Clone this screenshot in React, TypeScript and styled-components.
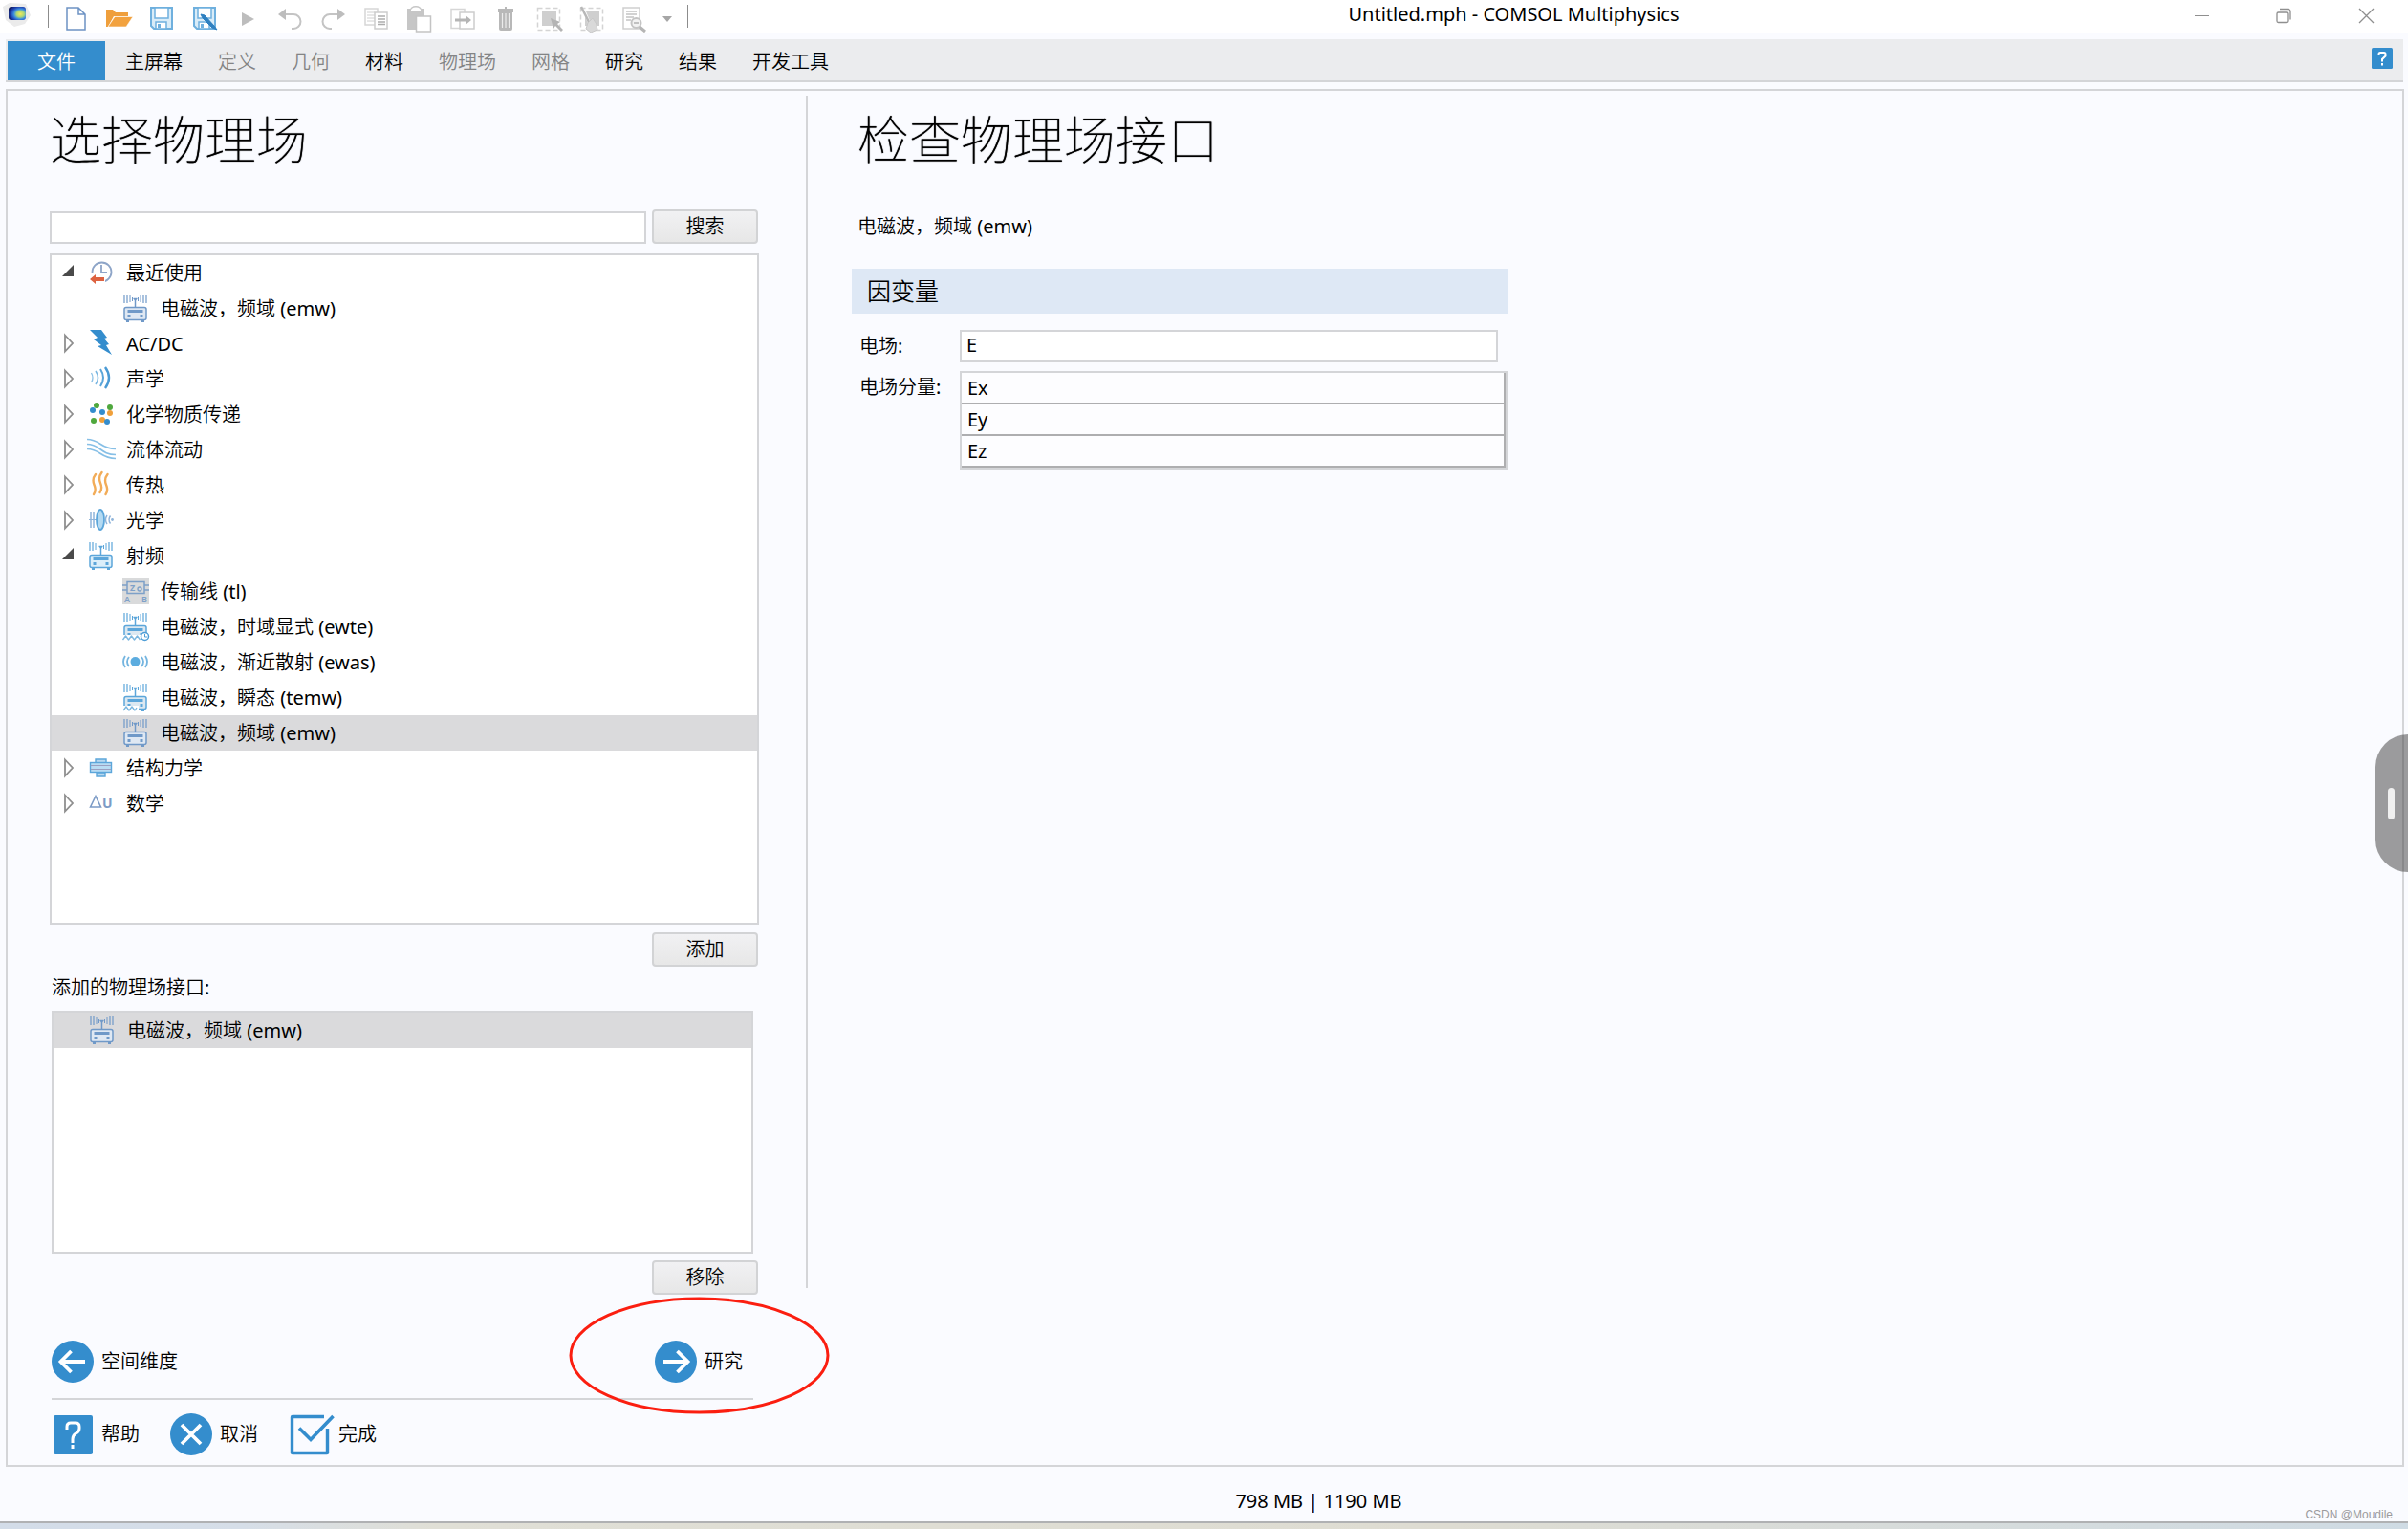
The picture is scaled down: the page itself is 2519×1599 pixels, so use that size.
import React from "react";
import styled, { createGlobalStyle, css } from "styled-components";

const FONT = `"Noto Sans", "Noto Sans CJK SC DemiLight", "Noto Sans CJK SC", sans-serif`;
const BLUE = "#348dcd";
const LINE = "#d4d5d8";
const BG = "#fafbff";

const GlobalStyle = createGlobalStyle`
  *, *::before, *::after { box-sizing: border-box; }
  body { margin: 0; background: ${BG}; }
  body, button, input, table { font-family: ${FONT}; font-size: 20px; line-height: 24px; color: #000; }
  button { margin: 0; padding: 0; border: 0; background: none; text-align: left; }
  svg { display: block; flex: none; }
`;

const Page = styled.div`
  position: relative;
  display: flex;
  flex-direction: column;
  min-height: 100vh;
  overflow: hidden;
`;

/* ---------- title bar ---------- */
const TitleBar = styled.header`
  display: flex;
  align-items: stretch;
  height: 35px;
  background: #fff;
`;
const Logo = styled.div`
  width: 50px;
`;
const Separator = styled.div`
  width: 1px;
  height: 24px;
  margin: 5px 6px 0 0;
  background: #8c8c8c;
`;
const QuickAccess = styled.div`
  display: flex;
`;
const WindowTitle = styled.h1`
  flex: 1;
  margin: 0;
  padding: 3px 0 0 180px;
  font-size: 20px;
  font-weight: 400;
  line-height: 24px;
  text-align: center;
`;
const WindowButtons = styled.div`
  display: flex;
`;

/* ---------- ribbon ---------- */
const Ribbon = styled.nav`
  display: flex;
  align-items: stretch;
  height: 45px;
  margin: 6px 5px 7px 6px;
  padding: 2px 11px 0 2px;
  background: #ebecee;
  border-bottom: 2px solid ${LINE};
`;
const FileTab = styled.button`
  width: 102px;
  margin-right: 3px;
  padding-top: 2px;
  text-align: center;
  color: #fff;
  background: ${BLUE};
`;
const Tab = styled.button`
  margin-right: 1px;
  padding: 2px 18px 0;
  color: ${(p) => (p.disabled ? "#838485" : "#000")};
`;
const RibbonHelp = styled.button`
  align-self: flex-start;
  margin: 7px 0 0 auto;
`;

/* ---------- wizard ---------- */
const Wizard = styled.main`
  flex: 1;
  display: grid;
  grid-template-columns: minmax(0, 1fr) minmax(0, 2fr);
  margin: 0 4px 0 6px;
  border: 2px solid ${LINE};
`;
const SelectPane = styled.section`
  display: flex;
  flex-direction: column;
  padding: 22px 49px 10px 44px;
`;
const ReviewPane = styled.section`
  margin: 5px 0 185px;
  padding: 17px 46px 0;
  border-left: 2px solid ${LINE};
`;
const Heading = styled.h2`
  margin: 0;
  font-family: "Noto Sans CJK SC", sans-serif;
  font-size: 54px;
  font-weight: 100;
  line-height: 54px;
  text-shadow: 0 0 1px #000;
`;
const SearchRow = styled.form`
  display: flex;
  align-items: flex-end;
  gap: 6px;
  margin: 48px 1px 10px 0;
`;
const TextField = styled.input`
  min-width: 0;
  height: 34px;
  padding: 0 5px 3px;
  background: #fff;
  border: 2px solid ${LINE};
  outline: 0;
`;
const SearchField = styled(TextField)`
  flex: 1;
`;
const PushButton = styled.button`
  flex: none;
  width: 111px;
  height: 36px;
  text-align: center;
  border: 2px solid #d2d3d5;
  border-radius: 4px;
  background: linear-gradient(#f1f1f3, #e7e7e7);
`;
const AddButton = styled(PushButton)`
  align-self: flex-end;
  margin: 8px 1px 10px 0;
`;
const RemoveButton = styled(PushButton)`
  align-self: flex-end;
  margin: 7px 1px 48px 0;
`;
const listBox = css`
  margin: 0;
  padding: 0;
  list-style: none;
  background: #fff;
  border: 2px solid ${LINE};
`;
const Tree = styled.ul`
  ${listBox}
  flex: 1;
`;
const AddedList = styled.ul`
  ${listBox}
  height: 254px;
  margin: 12px 6px 0 2px;
`;
const Row = styled.button<{ $indent: number; $selected?: boolean }>`
  display: flex;
  align-items: center;
  width: 100%;
  height: 37px;
  padding-left: ${(p) => p.$indent}px;
  background: ${(p) => (p.$selected ? "#dadadc" : "transparent")};
`;
const RowText = styled.span`
  padding-left: 11px;
  white-space: nowrap;
`;
const Twist = styled.span`
  width: 26px;
`;
const Caption = styled.div`
  padding-left: 2px;
`;
const StepRow = styled.div`
  display: flex;
  justify-content: space-between;
  margin: 0 6px 0 2px;
  padding-bottom: 16px;
  border-bottom: 2px solid ${LINE};
`;
const IconButton = styled.button`
  display: flex;
  align-items: center;
  gap: 8px;
  height: 44px;
`;
const NextHolder = styled.div`
  position: relative;
  width: 103px;
`;
const Highlight = styled.svg`
  position: absolute;
  left: -90px;
  top: -46px;
  pointer-events: none;
`;
const ActionRow = styled.div`
  display: flex;
  gap: 32px;
  margin: 14px 0 0 2px;
`;

/* ---------- review ---------- */
const Review = styled.div`
  max-width: 686px;
`;
const ReviewHeading = styled(Heading)`
  padding-left: 6px;
`;
const InterfaceName = styled.p`
  margin: 54px 0 32px;
  padding-left: 6px;
`;
const SectionTitle = styled.h3`
  margin: 0 0 17px;
  padding: 0 16px;
  font-size: 25px;
  font-weight: 400;
  line-height: 47px;
  background: #dee8f5;
`;
const Field = styled.div<{ $end: number }>`
  display: grid;
  grid-template-columns: 105px minmax(0, 1fr);
  align-items: start;
  margin-bottom: 9px;
  padding: 0 ${(p) => p.$end}px 0 8px;
`;
const FieldLabel = styled.label`
  line-height: 33px;
`;
const Components = styled.table`
  width: 100%;
  border-collapse: separate;
  border-spacing: 0;
  border: 2px solid ${LINE};
  background: #fdfdff;
`;
const Cell = styled.td`
  height: 33px;
  padding: 0 6px;
  border-bottom: 2px solid #aeaeb0;
  border-right: 2px solid #aeaeb0;
`;

/* ---------- footer and overlays ---------- */
const StatusBar = styled.footer`
  padding: 24px 0 9px 240px;
  text-align: center;
  border-bottom: 2px solid #b0b1b3;
`;
const Desktop = styled.div`
  height: 6px;
  background: linear-gradient(90deg, #d3dce8 0, #d6dee8 10%, #e0dfd6 18%, #dedcd2 60%, #cfdbe4 100%);
`;
const SideHandle = styled.button`
  position: absolute;
  right: 0;
  top: 768px;
  width: 34px;
  height: 144px;
  border-radius: 34px 0 0 34px;
  background: rgba(60, 60, 60, 0.5);
  &::before {
    content: "";
    display: block;
    width: 7px;
    height: 33px;
    margin-left: 13px;
    border-radius: 4px;
    background: #f0f0f0;
  }
`;
const Watermark = styled.div`
  position: absolute;
  right: 16px;
  bottom: 7px;
  font-family: "Liberation Sans", sans-serif;
  font-size: 12px;
  line-height: 16px;
  color: #9a9a9c;
`;

/* ---------- toolbar glyphs ---------- */
const G = "#c4c4c4";
const Glyph = ({ children, w = 45 }: { children: React.ReactNode; w?: number }) => (
  <svg width={w} height="35" viewBox={`0 0 ${w} 35`} fill="none" aria-hidden="true">
    {children}
  </svg>
);
const floppy = (
  <>
    <path d="M11 8h22v22H14l-3-3z" fill="#d9ecf8" stroke="#6fb0de" strokeWidth="2" />
    <path d="M15 8v11h14V8z" fill="#fff" stroke="#6fb0de" strokeWidth="1.5" />
    <path d="M16 30v-7h11v7z" fill="#fff" stroke="#6fb0de" strokeWidth="1.5" />
    <path d="M18 25h3v4h-3z" fill="#6fb0de" />
  </>
);
const dashedSelection = (
  <>
    <rect x="10.500" y="8.500" width="23" height="23" stroke="#d4d4d4" strokeWidth="1.5" strokeDasharray="5 3" />
    <path d="M15 12h15v15H15z" fill="#cfcfcf" />
  </>
);
const tools: [string, React.ReactNode][] = [
  ["新建", <path d="M13 8h12l7 7v16H13zM25 8v7h7" fill="#fff" stroke="#6d93c4" strokeWidth="1.5" />],
  [
    "打开",
    <>
      <path d="M9 28V10h7l3 3h13v4H17l-6 11z" fill="#ef9f3c" />
      <path d="M18 17.500h19L30 28H11z" fill="#f2a23f" stroke="#fff" strokeWidth="0.6" />
    </>,
  ],
  ["保存", floppy],
  [
    "另存为",
    <>
      {floppy}
      <path d="M18 15l4 1 10 11 3 4-5-2-10-10z" fill="#2f80c0" stroke="#2f80c0" />
    </>,
  ],
  ["运行", <path d="M16 13l13 7-13 7z" fill="#bdbdbd" />],
  [
    "撤消",
    <>
      <path d="M15 15h10a7.500 7.500 0 0 1 0 15h-2" stroke={G} strokeWidth="2" />
      <path d="M9 15l8-6v12z" fill="#bdbdbd" />
    </>,
  ],
  [
    "重做",
    <>
      <path d="M28 15H18a7.500 7.500 0 0 0 0 15h2" stroke={G} strokeWidth="2" />
      <path d="M34 15l-8-6v12z" fill="#bdbdbd" />
    </>,
  ],
  [
    "复制",
    <>
      <path d="M10 9h13v17H10z" fill="#fff" stroke="#d6d6d6" strokeWidth="1.5" />
      <path d="M12 13h8M12 16h8M12 19h8M12 22h8" stroke="#d0d0d0" />
      <path d="M20 13h13v17H20z" fill="#fff" stroke="#cdcdcd" strokeWidth="1.5" />
      <path d="M23 17h8M23 20h8M23 23h8M23 25.500h8" stroke="#adadad" strokeWidth="1.5" />
    </>,
  ],
  [
    "粘贴",
    <>
      <path d="M9 9h18v22H9z" fill="#c6c6c6" />
      <path d="M12 12c0-7 12-7 12 0z" fill="#fff" stroke="#c6c6c6" strokeWidth="1.5" />
      <path d="M18.500 17h15v16h-15z" fill="#fff" stroke={G} strokeWidth="1.5" />
    </>,
  ],
  [
    "重复",
    <>
      <path d="M10 9.500h14v20H10z" fill="#fff" stroke="#d6d6d6" strokeWidth="1.500" />
      <path d="M19 13h15v17H19z" fill="#fff" stroke="#cdcdcd" strokeWidth="1.5" />
      <path d="M14 21h12" stroke="#b5b5b5" strokeWidth="3" />
      <path d="M25 16l6 5-6 5z" fill="#b5b5b5" />
    </>,
  ],
  [
    "删除",
    <>
      <path d="M14 9h16v4H14zM21 7h2v3h-2z" fill="#b8b8b8" />
      <path d="M15 13h14v17q0 2-2 2H17q-2 0-2-2z" fill="#b8b8b8" />
      <path d="M18.500 14v15M22 14v15M25.500 14v15" stroke="#ececec" strokeWidth="1.200" />
    </>,
  ],
  [
    "选择",
    <>
      {dashedSelection}
      <path d="M24 19l10 4-3 2 6 6-2 2-6-6-2 3z" fill="#b4b4b4" />
    </>,
  ],
  [
    "清除选择",
    <>
      {dashedSelection}
      <path d="M14 11l5 12" stroke="#fff" strokeWidth="3" />
      <path d="M11 7l8 16" stroke="#b8b8b8" strokeWidth="2.5" />
      <path d="M18 24l5-5q5 6 5 12l-7 3-5-4z" fill="#d9d9d9" stroke="#c8c8c8" />
    </>,
  ],
  [
    "查找",
    <>
      <path d="M10 8h17v22H10z" fill="#fff" stroke="#cfcfcf" strokeWidth="1.5" />
      <path d="M13 12h11M13 15h11M13 18h8M13 21h5" stroke={G} strokeWidth="1.5" />
      <circle cx="23.500" cy="24" r="5" fill="#f2f2f2" stroke={G} strokeWidth="2" />
      <path d="M21 24h5" stroke="#b0b0b0" strokeWidth="1.5" />
      <path d="M27 28l6 5" stroke="#b5b5b5" strokeWidth="3" />
    </>,
  ],
];

const ComsolLogo = () => (
  <svg width="36" height="35" viewBox="0 0 36 35" aria-hidden="true">
    <defs>
      <radialGradient id="jet" cx="0.68" cy="0.55" r="0.75">
        <stop offset="0" stopColor="#f4ea5a" />
        <stop offset="0.3" stopColor="#a9d678" />
        <stop offset="0.5" stopColor="#3e8fe0" />
        <stop offset="0.75" stopColor="#1d3fae" />
        <stop offset="1" stopColor="#101a5c" />
      </radialGradient>
    </defs>
    <path d="M3 7l7-4 17 1 5 12-6 9-11 3-9-7z" fill="#ebebeb" />
    <rect x="9" y="7" width="18" height="14" rx="3" fill="url(#jet)" />
  </svg>
);

/* ---------- tree glyphs, each drawn on a 30x37 cell ---------- */
const Cell30 = ({ children }: { children: React.ReactNode }) => (
  <svg width="30" height="37" viewBox="0 0 30 37" fill="none" aria-hidden="true">
    {children}
  </svg>
);
const Radio = ({ c = "#7099c8", body = "#dfe8f3", wave, clock }: { c?: string; body?: string; wave?: boolean; clock?: boolean }) => (
  <Cell30>
    <path d="M3 4v9M26 4v9M6 4v9M23 4v9" stroke={c} strokeWidth="1.2" />
    <path d="M9 5v7M20 5v7M11.500 7v4M17.500 7v4" stroke={c} />
    <path d="M12.500 8h4L15 10.500V17h-1v-6.500z" fill={c} stroke={c} strokeWidth="0.5" />
    <rect x="3" y="17.500" width="23" height="13" rx="2" fill={body} stroke={c} strokeWidth="1.5" />
    <path d="M6.500 21.500h16" stroke={c} strokeWidth="3" />
    <path d="M6.500 26.500h3M19.500 26.500h3" stroke={c} strokeWidth="3" />
    <path d="M5 32h3M21 32h3" stroke={c} strokeWidth="2" />
    {wave && (
      <>
        <path d={clock ? "M1 27h29v8H1z" : "M1 27h17v7H1z"} fill="#fff" />
        <path
          d={clock ? "M1.500 32l3-4 3 4 3-4 3 4 3-4 3 4" : "M2 32l3-4 3 4 3-4 3 4 2-3"}
          stroke="#7ab6df"
          strokeWidth="1.3"
          strokeLinejoin="round"
        />
      </>
    )}
    {clock && (
      <>
        <circle cx="24.500" cy="28.500" r="4" fill="#fff" stroke="#4d9dd6" strokeWidth="1.500" />
        <path d="M24.500 26v3h2.500" stroke="#4d9dd6" />
      </>
    )}
  </Cell30>
);
const SKY = "#5ca6da";
const glyphs: Record<string, React.ReactNode> = {
  recent: (
    <Cell30>
      <circle cx="15.500" cy="17.500" r="10" fill="#fff" stroke="#8ea5c8" strokeWidth="1.8" />
      <path d="M15 10v8h6" stroke="#8ea5c8" strokeWidth="1.8" />
      <path d="M1 19h18v12H1z" fill="#fff" />
      <path d="M3 25l6-5v3h9v4H9v3z" fill="#dd6240" />
    </Cell30>
  ),
  emw: <Radio />,
  rf: <Radio c={SKY} body="#dceffa" />,
  ewte: <Radio c={SKY} body="#dce8f1" wave clock />,
  temw: <Radio c={SKY} body="#dce8f1" wave />,
  acdc: (
    <Cell30>
      <path d="M3 4h12l6 8-3 1 5 6-3 1 6 10-15-9 4-1-8-6 4-2z" fill={BLUE} />
    </Cell30>
  ),
  acoustics: (
    <Cell30>
      <path d="M4.500 12q3 5 0 10" stroke="#8cc1e6" strokeWidth="1.3" />
      <path d="M9 10q5 7 0 14" stroke="#7ab7e2" strokeWidth="1.6" />
      <path d="M14 8q6 9 0 18" stroke="#5aa5d9" strokeWidth="2" />
      <path d="M19 6q8 11 0 22" stroke="#4a9ad4" strokeWidth="2.4" />
    </Cell30>
  ),
  chem: (
    <Cell30>
      {[
        [10, 9, "#4fa83d"], [6, 14, BLUE], [16, 16, BLUE], [24, 11, "#4fa83d"],
        [24, 17, "#f0a03a"], [7, 25, "#4fa83d"], [16, 24, "#f0a03a"], [21, 26, BLUE],
      ].map(([x, y, c]) => (
        <circle key={`${x}-${y}`} cx={x} cy={y} r="3" fill={c as string} />
      ))}
    </Cell30>
  ),
  fluid: (
    <Cell30>
      <path d="M0 7.500c14 0 14 10 30 10M0 12.500c14 0 14 11 30 11M0 17.500c14 0 14 10 30 10" stroke="#86bfe6" strokeWidth="1.7" />
    </Cell30>
  ),
  heat: (
    <Cell30>
      {[7, 13.5, 19.5].map((x, i) => (
        <path
          key={x}
          d={`M${x + 2} ${i === 1 ? 5 : 7}q-4 5-1.500 11t-.5 10`}
          stroke="#f2ac58"
          strokeWidth="2.4"
          strokeLinecap="round"
        />
      ))}
    </Cell30>
  ),
  optics: (
    <Cell30>
      <path d="M4 9v17M7 9v17" stroke="#8fb4da" strokeWidth="1.5" />
      <path d="M2 17.500h8" stroke="#8fb4da" />
      <ellipse cx="14" cy="17.500" rx="4" ry="10.500" fill="#b4daf2" stroke={SKY} strokeWidth="1.8" />
      <path d="M21 13q-3 4.500 0 9M24.500 13.500q-3 4 0 8" stroke="#8fb4da" strokeWidth="1.5" />
      <circle cx="26.500" cy="17.500" r="1.400" fill="#8fb4da" />
    </Cell30>
  ),
  tl: (
    <Cell30>
      <path d="M1 4h28v28H1z" fill="#d9dadb" />
      <path d="M1 12h5M1 17h5M24 12h5M24 17h5" stroke="#7da0c8" strokeWidth="1.3" />
      <rect x="6" y="8.500" width="18" height="12" stroke="#7da0c8" strokeWidth="1.5" />
      <text x="9" y="18" fontSize="9" fontWeight="700" fill="#7da0c8">Z</text>
      <circle cx="19" cy="16" r="2" stroke="#7da0c8" strokeWidth="1.3" />
      <text x="3" y="30" fontSize="9" fontWeight="600" fill="#7da0c8">A</text>
      <text x="21" y="30" fontSize="9" fontWeight="600" fill="#7da0c8">B</text>
    </Cell30>
  ),
  ewas: (
    <Cell30>
      <circle cx="14.500" cy="18" r="5" fill="#5cacdf" />
      <path d="M8 13q-4 5 0 10M21 13q4 5 0 10M4 12q-4 6 0 12M25 12q4 6 0 12" stroke="#74b5e0" strokeWidth="1.8" />
    </Cell30>
  ),
  structural: (
    <Cell30>
      <path d="M9 9h11v4H9zM10 23h9v4h-9z" fill="#b9d8ef" stroke={SKY} strokeWidth="1.4" />
      <rect x="3.500" y="12.500" width="22" height="10" fill="#b9dcf3" stroke={SKY} strokeWidth="1.4" />
      <path d="M4 15.500h21M4 19.500h21" stroke="#9a9fc0" strokeWidth="1.2" />
    </Cell30>
  ),
  math: (
    <Cell30>
      <path d="M3.500 22L9 10.500 14.500 22z" stroke="#7c9bc6" strokeWidth="1.6" />
      <text x="16" y="23" fontSize="14" fontWeight="700" fill="#7c9bc6">U</text>
    </Cell30>
  ),
};

const Arrow = ({ open }: { open: boolean }) => (
  <svg width="12" height="37" viewBox="0 0 12 37" aria-hidden="true">
    {open ? (
      <path d="M12 10v12H0z" fill="#4a4a4a" />
    ) : (
      <path d="M3 9.500l8 8.500-8 8.500z" fill="#fff" stroke="#8f8f8f" strokeWidth="1.8" />
    )}
  </svg>
);

type Node = { icon: string; text: string; open?: boolean; child?: boolean; selected?: boolean };
const nodes: Node[] = [
  { icon: "recent", text: "最近使用", open: true },
  { icon: "emw", text: "电磁波，频域 (emw)", child: true },
  { icon: "acdc", text: "AC/DC" },
  { icon: "acoustics", text: "声学" },
  { icon: "chem", text: "化学物质传递" },
  { icon: "fluid", text: "流体流动" },
  { icon: "heat", text: "传热" },
  { icon: "optics", text: "光学" },
  { icon: "rf", text: "射频", open: true },
  { icon: "tl", text: "传输线 (tl)", child: true },
  { icon: "ewte", text: "电磁波，时域显式 (ewte)", child: true },
  { icon: "ewas", text: "电磁波，渐近散射 (ewas)", child: true },
  { icon: "temw", text: "电磁波，瞬态 (temw)", child: true },
  { icon: "emw", text: "电磁波，频域 (emw)", child: true, selected: true },
  { icon: "structural", text: "结构力学" },
  { icon: "math", text: "数学" },
];

const tabs: [string, boolean][] = [
  ["主屏幕", true], ["定义", false], ["几何", false], ["材料", true], ["物理场", false],
  ["网格", false], ["研究", true], ["结果", true], ["开发工具", true],
];

const Round = ({ d }: { d: string }) => (
  <svg width="44" height="44" viewBox="0 0 44 44" fill="none" aria-hidden="true">
    <circle cx="22" cy="22" r="22" fill={BLUE} />
    <path d={d} stroke="#fff" strokeWidth="3.8" />
  </svg>
);
const ARROW_RIGHT = "M9 22h25M23.500 11l11 11-11 11";
const ARROW_LEFT = "M35 22H10M20.500 11l-11 11 11 11";
const CROSS = "M12 12l20 20M32 12L12 32";

export default function App() {
  return (
    <>
      <GlobalStyle />
      <Page>
        <TitleBar>
          <Logo><ComsolLogo /></Logo>
          <Separator />
          <QuickAccess>
            {tools.map(([name, art]) => (
              <button key={name} type="button" aria-label={name}><Glyph>{art}</Glyph></button>
            ))}
            <button type="button" aria-label="自定义工具栏">
              <Glyph w={32}><path d="M6 17h10l-5 6z" fill="#a6a6a6" /></Glyph>
            </button>
          </QuickAccess>
          <Separator />
          <WindowTitle>Untitled.mph - COMSOL Multiphysics</WindowTitle>
          <WindowButtons>
            <button type="button" aria-label="最小化">
              <Glyph w={86}><path d="M35 16.500h15" stroke="#8f8f8f" /></Glyph>
            </button>
            <button type="button" aria-label="还原">
              <Glyph w={86}>
                <rect x="35" y="13" width="11" height="10.500" rx="1.500" stroke="#8f8f8f" strokeWidth="1.3" />
                <path d="M38 9.500h8q3 0 3 3v8" stroke="#8f8f8f" strokeWidth="1.3" />
              </Glyph>
            </button>
            <button type="button" aria-label="关闭">
              <Glyph w={86}><path d="M35 9l15 15M50 9L35 24" stroke="#8f8f8f" strokeWidth="1.3" /></Glyph>
            </button>
          </WindowButtons>
        </TitleBar>

        <Ribbon>
          <FileTab type="button">文件</FileTab>
          {tabs.map(([name, on]) => (
            <Tab key={name} type="button" disabled={!on}>{name}</Tab>
          ))}
          <RibbonHelp type="button" aria-label="帮助">
            <svg width="22" height="22" viewBox="0 0 22 22" fill="none" aria-hidden="true">
              <rect width="22" height="22" rx="1.500" fill={BLUE} />
              <path d="M7.500 8V6.500Q7.500 5 9 5h4q1.500 0 1.500 1.500V8.500L11 12v2.500M11 16v2.500" stroke="#fff" strokeWidth="2" />
            </svg>
          </RibbonHelp>
        </Ribbon>

        <Wizard>
          <SelectPane>
            <Heading>选择物理场</Heading>
            <SearchRow onSubmit={(e) => e.preventDefault()}>
              <SearchField type="text" aria-label="搜索物理场" />
              <PushButton type="submit">搜索</PushButton>
            </SearchRow>
            <Tree>
              {nodes.map((n, i) => (
                <li key={i}>
                  <Row type="button" $indent={n.child ? 73 : 11} $selected={n.selected}>
                    {!n.child && <Twist><Arrow open={!!n.open} /></Twist>}
                    {glyphs[n.icon]}
                    <RowText>{n.text}</RowText>
                  </Row>
                </li>
              ))}
            </Tree>
            <AddButton type="button">添加</AddButton>
            <Caption id="added">添加的物理场接口:</Caption>
            <AddedList aria-labelledby="added">
              <li>
                <Row type="button" $indent={36} $selected>
                  {glyphs.emw}
                  <RowText>电磁波，频域 (emw)</RowText>
                </Row>
              </li>
            </AddedList>
            <RemoveButton type="button">移除</RemoveButton>
            <StepRow>
              <IconButton type="button"><Round d={ARROW_LEFT} />空间维度</IconButton>
              <NextHolder>
                <IconButton type="button"><Round d={ARROW_RIGHT} />研究</IconButton>
                <Highlight width="274" height="124" viewBox="0 0 274 124" fill="none" aria-hidden="true">
                  <ellipse cx="136.500" cy="61.500" rx="134.500" ry="59.500" stroke="#fb1e10" strokeWidth="3" />
                </Highlight>
              </NextHolder>
            </StepRow>
            <ActionRow>
              <IconButton type="button">
                <svg width="44" height="44" viewBox="0 0 44 44" fill="none" aria-hidden="true">
                  <rect x="2" y="2" width="41" height="41" rx="2" fill={BLUE} />
                  <path d="M16 17v-3q0-4 4-4h5q4 0 4 4v2q0 3-3.500 5T22 27v4M22 33v4" stroke="#fff" strokeWidth="3" />
                </svg>
                帮助
              </IconButton>
              <IconButton type="button"><Round d={CROSS} />取消</IconButton>
              <IconButton type="button">
                <svg width="44" height="44" viewBox="0 0 44 44" fill="none" overflow="visible" aria-hidden="true">
                  <path d="M37 3.500H4q-.5 0-.5 .5v37q0 .5 .5 .5h36q.5 0 .5-.5V16" stroke={BLUE} strokeWidth="3.4" />
                  <path d="M11 15.500l12 12L46.500 3" stroke={BLUE} strokeWidth="3.6" />
                </svg>
                完成
              </IconButton>
            </ActionRow>
          </SelectPane>

          <ReviewPane>
            <Review>
              <ReviewHeading>检查物理场接口</ReviewHeading>
              <InterfaceName>电磁波，频域 (emw)</InterfaceName>
              <SectionTitle>因变量</SectionTitle>
              <Field $end={10}>
                <FieldLabel htmlFor="field">电场:</FieldLabel>
                <TextField id="field" defaultValue="E" />
              </Field>
              <Field $end={0}>
                <FieldLabel as="span" id="components">电场分量:</FieldLabel>
                <Components aria-labelledby="components">
                  <tbody>
                    {["Ex", "Ey", "Ez"].map((c) => (
                      <tr key={c}><Cell>{c}</Cell></tr>
                    ))}
                  </tbody>
                </Components>
              </Field>
            </Review>
          </ReviewPane>
        </Wizard>

        <StatusBar>798 MB | 1190 MB</StatusBar>
        <Desktop />
        <SideHandle type="button" aria-label="展开侧栏" />
        <Watermark>CSDN @Moudile</Watermark>
      </Page>
    </>
  );
}
